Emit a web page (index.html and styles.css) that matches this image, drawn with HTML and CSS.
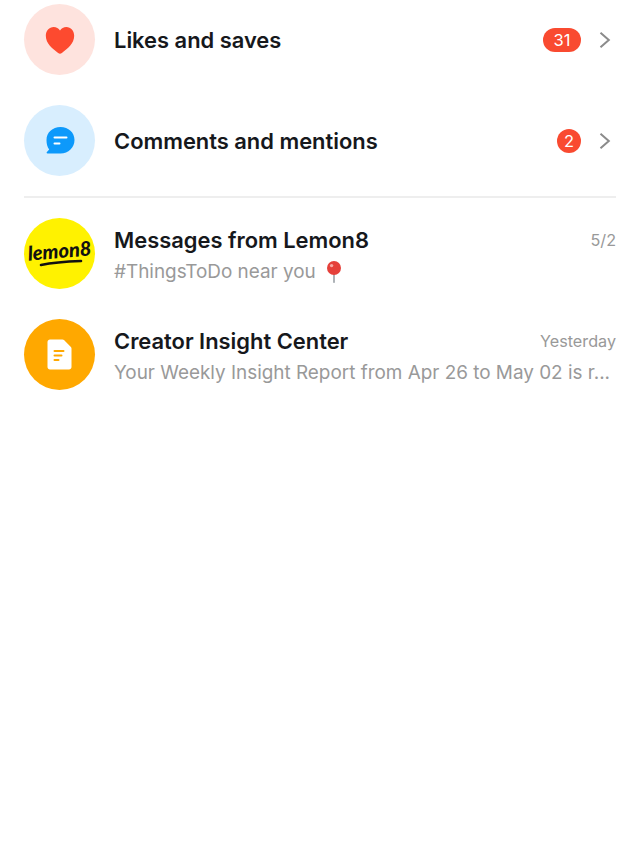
FILE: index.html
```html
<!DOCTYPE html>
<html lang="en">
<head>
<meta charset="utf-8">
<title>Notifications</title>
<link rel="stylesheet" href="styles.css">
</head>
<body>
<main class="page">
  <section class="group">
    <div class="row">
      <div class="avatar avatar-like">
        <svg class="icon" width="30" height="28" viewBox="0 0 32 30"><path fill="#fd4a2f" d="M16 29.6c-.7 0-1.4-.3-2-.8C8 24 .8 19 .8 10.4.8 4.9 4.5 1 9.200 1c2.900 0 5.300 1.400 6.800 3.900C17.500 2.400 19.900 1 22.800 1c4.700 0 8.400 3.900 8.400 9.400 0 8.600-7.200 13.600-13.200 18.400-.6.500-1.300.8-2 .8z"/></svg>
      </div>
      <div class="title">Likes and saves</div>
      <span class="badge badge-wide">31</span>
      <svg class="chevron" width="12" height="18" viewBox="0 0 12 18"><path d="M1.500 1.800 9.800 9l-8.300 7.200" fill="none" stroke="#8b8b8b" stroke-width="2"/></svg>
    </div>
    <div class="row">
      <div class="avatar avatar-comment">
        <svg class="icon" width="30" height="30" viewBox="0 0 30 30"><path fill="#0d99fb" d="M15.500 1C23.500 1 29.500 6.500 29.500 14s-6 13.500-14 13.500H2.500c-.8 0-1.200-.9-.6-1.500l2.300-2.600C2.300 21 1.500 17.800 1.500 14 1.500 6.500 7.500 1 15.500 1z"/><rect x="8.500" y="10.500" width="14" height="2" rx="1" fill="#fff"/><rect x="8.500" y="16.500" width="7" height="2" rx="1" fill="#fff"/></svg>
      </div>
      <div class="title">Comments and mentions</div>
      <span class="badge">2</span>
      <svg class="chevron" width="12" height="18" viewBox="0 0 12 18"><path d="M1.500 1.800 9.800 9l-8.300 7.200" fill="none" stroke="#8b8b8b" stroke-width="2"/></svg>
    </div>
  </section>
  <hr class="divider">
  <section class="group">
    <div class="row">
      <div class="avatar avatar-lemon">
        <span class="logo">lemon8</span>
        <svg class="logo-line" width="44" height="8" viewBox="0 0 44 8"><path d="M2 6C14 3.500 28 2.500 42 2" fill="none" stroke="#111" stroke-width="2.600" stroke-linecap="round"/></svg>
      </div>
      <div class="body">
        <div class="line">
          <div class="name">Messages from Lemon8</div>
          <time class="time">5/2</time>
        </div>
        <div class="sub">#ThingsToDo near you
          <svg class="pin" width="18" height="22" viewBox="0 0 18 22"><rect x="8.200" y="10" width="1.600" height="12" rx=".8" fill="#9aa0a6"/><circle cx="9" cy="7" r="7" fill="#e5403a"/><circle cx="6.600" cy="4.600" r="1.700" fill="#f8a9a4"/></svg>
        </div>
      </div>
    </div>
    <div class="row">
      <div class="avatar avatar-doc">
        <svg class="icon" width="25" height="31" viewBox="0 0 25 31"><path fill="#fff" d="M3 .5h12.500c.6 0 1.100.2 1.500.6l6.900 7c.400.400.600.900.600 1.400V28c0 1.400-1.100 2.500-2.500 2.500H3C1.600 30.500.5 29.400.5 28V3C.5 1.600 1.600.5 3 .5z"/><rect x="6.500" y="11" width="11" height="2" rx="1" fill="#ffa800"/><rect x="6.500" y="15.500" width="9" height="2" rx="1" fill="#ffa800"/><rect x="6.500" y="20" width="6" height="2" rx="1" fill="#ffa800"/></svg>
      </div>
      <div class="body">
        <div class="line">
          <div class="name">Creator Insight Center</div>
          <time class="time">Yesterday</time>
        </div>
        <div class="sub">Your Weekly Insight Report from Apr 26 to May 02 is r...</div>
      </div>
    </div>
  </section>
</main>
</body>
</html>
```
FILE: styles.css
```css
* { box-sizing: border-box; }
html, body { margin: 0; padding: 0; background: #fff; }
body { font-family: Inter, "Liberation Sans", sans-serif; color: #16181c; }
.page { width: 640px; height: 855px; padding: 4px 24px 0; overflow: hidden; }
.group { display: flex; flex-direction: column; gap: 30px; }
.row { display: flex; align-items: center; height: 71px; }
.avatar { position: relative; flex: none; width: 71px; height: 71px; margin-right: 19px; border-radius: 50%; display: flex; align-items: center; justify-content: center; }
.avatar-like { background: #fee3de; }
.avatar-comment { background: #d8eefe; }
.avatar-lemon { background: #fff200; }
.avatar-doc { background: #ffa800; }
.title { flex: 1; font-size: 21.900px; font-weight: 560; }
.badge { flex: none; min-width: 24px; height: 24px; padding: 0 6px; border-radius: 12px; background: #f94a30; color: #fff; font-size: 16.500px; line-height: 24px; text-align: center; }
.badge-wide { width: 38px; }
.chevron { flex: none; margin: 0 5px 0 18px; }
.divider { height: 2px; margin: 20px 0 20px; border: 0; background: #eeeeee; }
.body { flex: 1; min-width: 0; display: flex; flex-direction: column; gap: 5px; padding-top: 5px; }
.line { display: flex; align-items: center; justify-content: space-between; }
.name { font-size: 21.900px; font-weight: 560; line-height: 27px; }
.time { font-size: 16.200px; line-height: 27px; color: #999; }
.sub { display: flex; align-items: center; gap: 9px; font-size: 18.900px; line-height: 26px; color: #999; white-space: nowrap; }
.pin { flex: none; }
.logo { font-family: Lato, sans-serif; font-style: italic; font-weight: 900; font-size: 20px; line-height: 1; color: #111; transform: rotate(-5deg) translateY(-4px); }
.logo-line { position: absolute; left: 15px; top: 41px; }
```
